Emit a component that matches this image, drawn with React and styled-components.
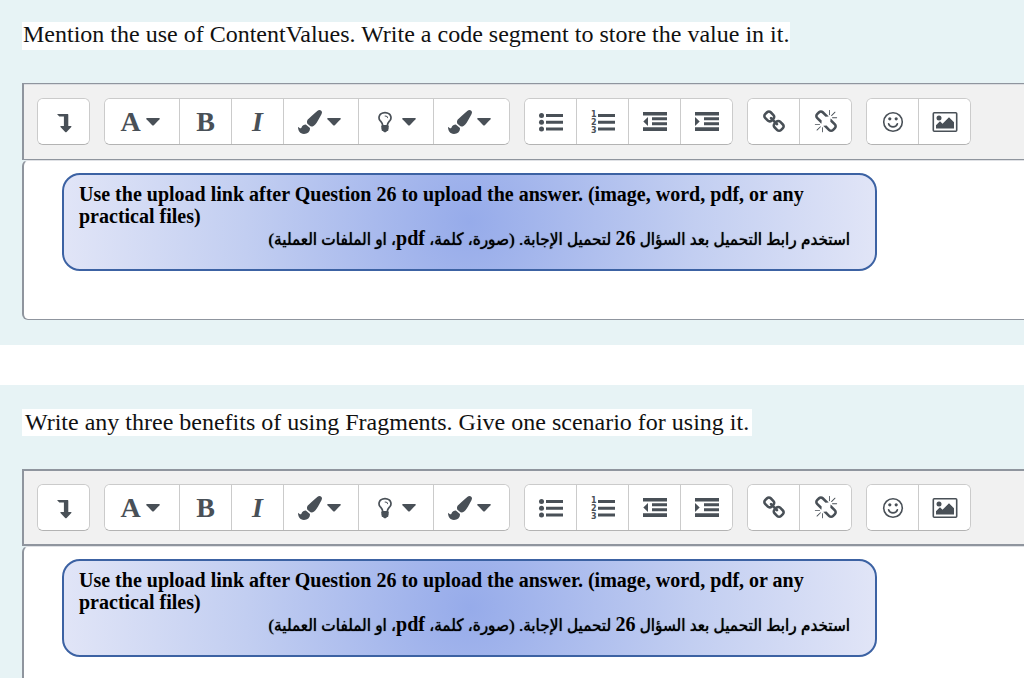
import React from "react";
import styled, { createGlobalStyle } from "styled-components";
import { FaPaintBrush } from "react-icons/fa";

const GlobalStyle = createGlobalStyle`
  * {
    box-sizing: border-box;
  }
  body {
    margin: 0;
    background: #fff;
    overflow-x: hidden;
    font-family: "Liberation Serif", "Times New Roman", serif;
  }
`;

const LevelDown = () => (
  <Svg viewBox="0 0 24 24">
    <path d="M5 4h10.600q.7 0 .7.7v11.300h2.600q1 .2.4 1.100l-4.700 4.900q-.7.6-1.400 0l-4.700-4.900q-.5-.9.4-1.100h3V6.500H7.300z" />
  </Svg>
);

const Caret = () => (
  <CaretSvg viewBox="0 0 14 8">
    <path d="M1 0h12q1.400.2.5 1.300L7.800 7.200q-.8.8-1.600 0L.5 1.300Q-.4.2 1 0z" />
  </CaretSvg>
);

const Lightbulb = () => (
  <Svg viewBox="0 0 1792 1792">
    <path d="M1120 576q0 13-9.5 22.5t-22.5 9.5-22.5-9.5-9.5-22.5q0-46-54-71t-106-25q-13 0-22.5-9.5t-9.5-22.5 9.5-22.5 22.5-9.5q50 0 99.5 16t87 54 37.5 90zm160 0q0-72-34.5-134t-90-101.5-123-62-136.5-22.5-136.5 22.5-123 62-90 101.5-34.5 134q0 101 68 180 10 11 30.5 33t30.5 33q128 153 141 298h228q13-145 141-298 10-11 30.5-33t30.5-33q68-79 68-180zm128 0q0 155-103 268-45 49-74.5 87t-59.5 95.5-34 107.5q47 28 47 82 0 37-25 64 25 27 25 64 0 52-45 81 13 23 13 47 0 46-31.5 71t-77.5 25q-20 44-60 70t-87 26-87-26-60-70q-46 0-77.5-25t-31.5-71q0-24 13-47-45-29-45-81 0-37 25-64-25-27-25-64 0-54 47-82-4-50-34-107.5t-59.5-95.5-74.5-87q-103-113-103-268 0-99 44.5-184.5t117-142 164-89 186.5-32.5 186.5 32.5 164 89 117 142 44.5 184.5z" />
  </Svg>
);

const ListUl = () => (
  <Svg viewBox="0 0 24 24">
    <circle cx="2.500" cy="5.500" r="2.500" />
    <circle cx="2.500" cy="12.300" r="2.500" />
    <circle cx="2.500" cy="19" r="2.500" />
    <path d="M7 4h17v3H7zM7 10.800h17v3H7zM7 17.500h17v3H7z" />
  </Svg>
);

const ListOl = () => (
  <Svg viewBox="0 0 24 24">
    <ListDigit x="0" y="7">1</ListDigit>
    <ListDigit x="0" y="15">2</ListDigit>
    <ListDigit x="0" y="23">3</ListDigit>
    <path d="M7 4h17v3H7zM7 10.800h17v3H7zM7 17.500h17v3H7z" />
  </Svg>
);

const Outdent = () => (
  <Svg viewBox="0 0 24 24">
    <path d="M0 2h24v3.400H0zM9 7.300h15v3H9zM9 12.300h15v3H9zM0 17.300h24v3.700H0zM5 7v9L.3 11.500z" />
  </Svg>
);

const Indent = () => (
  <Svg viewBox="0 0 24 24">
    <path d="M0 2h24v3.400H0zM9 7.300h15v3H9zM9 12.300h15v3H9zM0 17.300h24v3.700H0zM0 7v9l4.700-4.500z" />
  </Svg>
);

const Chain = () => (
  <Svg viewBox="0 0 1792 1792">
    <path d="M1520 1216q0-40-28-68l-208-208q-28-28-68-28-42 0-72 32 3 3 19 18.5t21.5 21.5 15 19 13 25.5 3.500 27.500q0 40-28 68t-68 28q-15 0-27.5-3.5t-25.5-13-19-15-21.5-21.5-18.5-19q-33 31-33 73 0 40 28 68l206 207q27 27 68 27 40 0 68-26l147-146q28-28 28-67zm-703-705q0-40-28-68l-206-207q-28-28-68-28-39 0-68 27l-147 146q-28 28-28 67 0 40 28 68l208 208q27 27 68 27 42 0 72-31-3-3-19-18.5t-21.5-21.5-15-19-13-25.5-3.5-27.5q0-40 28-68t68-28q15 0 27.5 3.5t25.5 13 19 15 21.5 21.5 18.5 19q33-31 33-73zm895 705q0 120-85 203l-147 146q-83 83-203 83-121 0-204-85l-206-207q-83-83-83-203 0-123 88-209l-88-88q-86 88-208 88-120 0-204-84l-208-208q-84-84-84-204t85-203l147-146q83-83 203-83 121 0 204 85l206 207q83 83 83 203 0 123-88 209l88 88q86-88 208-88 120 0 204 84l208 208q84 84 84 204z" />
  </Svg>
);

const ChainBroken = () => (
  <Svg viewBox="0 0 1792 1792">
    <path d="M503 1271l-256 256q-10 9-23 9-12 0-23-9-9-10-9-23t9-23l256-256q10-9 23-9t23 9q9 10 9 23t-9 23zm169 41v320q0 14-9 23t-23 9-23-9-9-23v-320q0-14 9-23t23-9 23 9 9 23zm-224-224q0 14-9 23t-23 9h-320q-14 0-23-9t-9-23 9-23 23-9h320q14 0 23 9t9 23zm1264 128q0 120-85 203l-147 146q-83 83-203 83-121 0-204-85l-334-335q-21-21-42-56l239-18 273 274q28 28 68 27.5t68-27.5l147-146q28-28 28-67 0-40-28-68l-274-275 18-239q35 21 56 42l336 336q84 86 84 204zm-617-724l-239 18-273-274q-28-28-68-28-39 0-68 27l-147 146q-28 28-28 67 0 40 28 68l274 274-18 240q-35-21-56-42l-336-336q-84-86-84-204 0-120 85-203l147-146q83-83 203-83 121 0 204 85l334 335q21 21 42 56zm633 84q0 14-9 23t-23 9h-320q-14 0-23-9t-9-23 9-23 23-9h320q14 0 23 9t9 23zm-544-544v320q0 14-9 23t-23 9-23-9-9-23v-320q0-14 9-23t23-9 23 9 9 23zm407 151l-256 256q-11 9-23 9t-23-9q-9-10-9-23t9-23l256-256q10-9 23-9t23 9q9 10 9 23t-9 23z" />
  </Svg>
);

const Smile = () => (
  <Svg viewBox="0 0 24 24">
    <circle cx="12" cy="12" r="9.300" fill="none" stroke="currentColor" strokeWidth="1.600" />
    <circle cx="8.800" cy="8.800" r="1.600" />
    <circle cx="15.200" cy="8.800" r="1.600" />
    <path
      d="M7.600 13.800c1.400 4.200 7.400 4.200 8.800 0"
      fill="none"
      stroke="currentColor"
      strokeWidth="1.700"
      strokeLinecap="round"
    />
  </Svg>
);

const Picture = () => (
  <Svg viewBox="0 0 26 24" $wide>
    <rect x="1.300" y="2.800" width="23.400" height="18.400" rx="1" fill="none" stroke="currentColor" strokeWidth="1.600" />
    <circle cx="7" cy="8" r="2.500" />
    <path d="M4 18.500v-3.300l4-4 2.500 2.500 6.500-6.500 5 5v6.300z" />
  </Svg>
);

const toolGroups = [
  [{ id: "toggle", label: "Show more buttons", icon: <LevelDown /> }],
  [
    { id: "styles", label: "Paragraph styles", text: "A", menu: true },
    { id: "bold", label: "Bold", text: "B" },
    { id: "italic", label: "Italic", text: "I", italic: true },
    { id: "color", label: "Font colour", icon: <FaPaintBrush />, menu: true },
    { id: "hint", label: "Hints", icon: <Lightbulb />, menu: true },
    { id: "background", label: "Background colour", icon: <FaPaintBrush />, menu: true },
  ],
  [
    { id: "ul", label: "Unordered list", icon: <ListUl /> },
    { id: "ol", label: "Ordered list", icon: <ListOl /> },
    { id: "outdent", label: "Outdent", icon: <Outdent /> },
    { id: "indent", label: "Indent", icon: <Indent /> },
  ],
  [
    { id: "link", label: "Link", icon: <Chain /> },
    { id: "unlink", label: "Unlink", icon: <ChainBroken /> },
  ],
  [
    { id: "emoji", label: "Emoji picker", icon: <Smile /> },
    { id: "image", label: "Insert image", icon: <Picture /> },
  ],
];

const questions = [
  {
    id: 1,
    text: "Mention the use of ContentValues. Write a code segment to store the value in it.",
  },
  {
    id: 2,
    text: "Write any three benefits of using Fragments. Give one scenario for using it.",
    heavy: true,
  },
];

const Toolbar = ({ heavy }) => (
  <ToolbarWrapper role="toolbar" $heavy={heavy}>
    {toolGroups.map((group) => (
      <ToolGroup key={group[0].id}>
        {group.map((tool) => {
          const { id, label, icon, text, italic, menu } = tool;
          return (
            <ToolButton key={id} type="button" aria-label={label} $menu={menu}>
              {icon || <Letter $italic={italic}>{text}</Letter>}
              {menu && <Caret />}
            </ToolButton>
          );
        })}
      </ToolGroup>
    ))}
  </ToolbarWrapper>
);

const Notice = () => (
  <NoticeBox>
    <p>
      Use the upload link after Question 26 to upload the answer. (image, word,
      pdf, or any practical files)
    </p>
    <ArabicText dir="rtl" lang="ar">
      استخدم رابط التحميل بعد السؤال <Latin>26</Latin> لتحميل الإجابة. (صورة،
      كلمة، <Latin>pdf</Latin>، او الملفات العملية)
    </ArabicText>
  </NoticeBox>
);

const App = () => {
  return (
    <>
      <GlobalStyle />
      <Page>
        {questions.map((question) => {
          const { id, text, heavy } = question;
          return (
            <Question key={id}>
              <QuestionText $heavy={heavy}>{text}</QuestionText>
              <Toolbar heavy={heavy} />
              <Editor>
                <Notice />
              </Editor>
            </Question>
          );
        })}
      </Page>
    </>
  );
};

const Page = styled.main`
  display: flex;
  flex-direction: column;
  gap: 40px;
  height: 100vh;
  overflow: hidden;
`;

const Question = styled.section`
  flex-shrink: 0;
  padding: 22px 0 25px 22px;
  background: #e7f3f5;
`;

const QuestionText = styled.h2`
  width: fit-content;
  margin: ${({ $heavy }) => ($heavy ? "2px 0 33px" : "0 0 33px")};
  padding: ${({ $heavy }) => ($heavy ? "1px 3px 2px" : "0 1px 4px")};
  background: #fff;
  color: #111;
  font-size: 24px;
  font-weight: normal;
  line-height: 24px;
`;

const ToolbarWrapper = styled.div`
  display: flex;
  gap: 14px;
  padding: 13px;
  background: #f1f1f1;
  border: solid #8f959e;
  border-width: 2px 0 2px 2px;
  ${({ $heavy }) =>
    !$heavy &&
    `
    padding: 14px 13px;
    border-width: 1px 0 1px 2px;
    box-shadow: inset 0 1px #dcdde1;
  `}
`;

const ToolGroup = styled.div`
  display: flex;
  flex-shrink: 0;
  border: 1px solid #cbcbcb;
  border-bottom-color: #b3b3b3;
  border-radius: 6px;
  background: #fff;
  overflow: hidden;
`;

const ToolButton = styled.button`
  display: flex;
  align-items: center;
  justify-content: center;
  gap: 5px;
  width: ${({ $menu }) => ($menu ? "75px" : "52px")};
  height: 45px;
  padding: ${({ $menu }) => ($menu ? "0 4px 0 0" : "0")};
  border: 0;
  border-right: 1px solid #cbcbcb;
  background: #fff;
  color: #495057;
  font-size: 24px;
  cursor: pointer;
  &:last-child {
    width: ${({ $menu }) => ($menu ? "75px" : "51px")};
    border-right: 0;
  }
`;

const Svg = styled.svg`
  width: ${({ $wide }) => ($wide ? "26px" : "24px")};
  height: 24px;
  fill: currentColor;
  overflow: visible;
`;

const CaretSvg = styled.svg`
  width: 14px;
  height: 8px;
  fill: currentColor;
`;

const ListDigit = styled.text`
  font-family: "DejaVu Sans", sans-serif;
  font-size: 8px;
  font-weight: bold;
`;

const Letter = styled.span`
  font-family: "Liberation Serif", serif;
  font-size: 28px;
  font-weight: bold;
  font-style: ${({ $italic }) => ($italic ? "italic" : "normal")};
  line-height: 32px;
`;

const Editor = styled.div`
  min-height: 160px;
  padding: 12px 38px;
  background: #fff;
  border: solid #8f959e;
  border-width: 1px 0 1px 2px;
  border-top-color: #dfe1e5;
  border-radius: 6px 0 0 6px;
`;

const NoticeBox = styled.div`
  max-width: 815px;
  min-height: 98px;
  padding: 8px 25px 18px 15px;
  border: 2px solid #3c62a3;
  border-radius: 18px;
  background: radial-gradient(circle at center, #96abea, #c2cef1 55%, #e1e5f7);
  color: #000;
  font-size: 20px;
  font-weight: bold;
  line-height: 22px;
  p {
    margin: 0;
  }
`;

const ArabicText = styled.p`
  font-family: "Liberation Serif", "DejaVu Sans Condensed", "DejaVu Sans", serif;
  font-size: 17px;
  font-weight: normal;
  text-shadow: 0 0 1px #000;
`;

const Latin = styled.span`
  font-size: 20px;
  font-weight: bold;
  text-shadow: none;
`;

export default App;
